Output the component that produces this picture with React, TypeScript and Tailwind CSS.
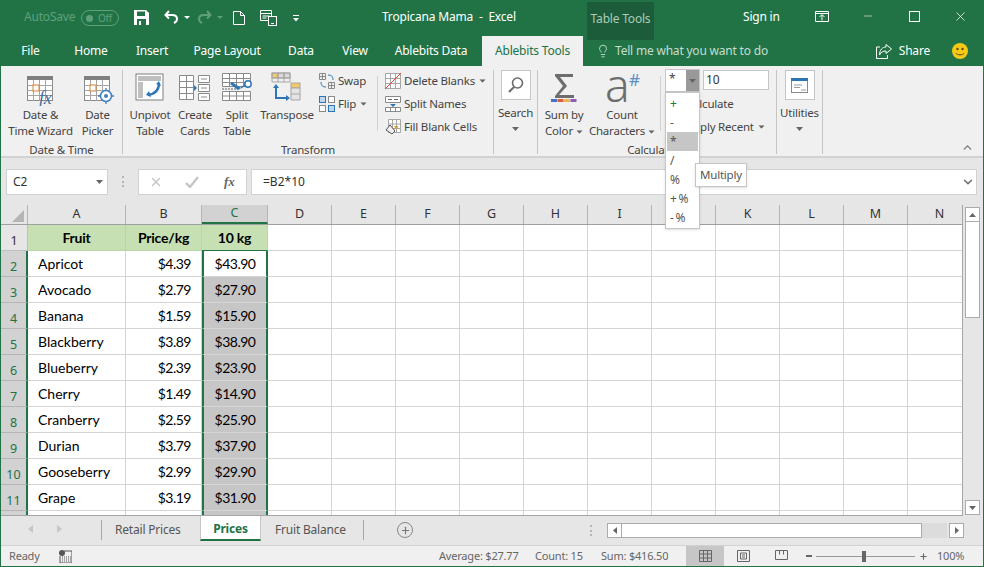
import React from 'react';
import { ChevronDown, ChevronUp, Lightbulb, Minus, Plus, X } from 'lucide-react';

const rows = [
  ['Apricot', '$4.39', '$43.90'],
  ['Avocado', '$2.79', '$27.90'],
  ['Banana', '$1.59', '$15.90'],
  ['Blackberry', '$3.89', '$38.90'],
  ['Blueberry', '$2.39', '$23.90'],
  ['Cherry', '$1.49', '$14.90'],
  ['Cranberry', '$2.59', '$25.90'],
  ['Durian', '$3.79', '$37.90'],
  ['Gooseberry', '$2.99', '$29.90'],
  ['Grape', '$3.19', '$31.90'],
  ['', '', ''],
];

const cols = [
  { n: 'A', w: 'w-[98px]' },
  { n: 'B', w: 'w-[76px]' },
  { n: 'C', w: 'w-[66px]' },
  { n: 'D', w: 'w-[64px]' },
  { n: 'E', w: 'w-[64px]' },
  { n: 'F', w: 'w-[64px]' },
  { n: 'G', w: 'w-[64px]' },
  { n: 'H', w: 'w-[64px]' },
  { n: 'I', w: 'w-[64px]' },
  { n: 'J', w: 'w-[64px]' },
  { n: 'K', w: 'w-[64px]' },
  { n: 'L', w: 'w-[64px]' },
  { n: 'M', w: 'w-[64px]' },
  { n: 'N', w: 'w-[64px]' },
];

const tabs = [
  { t: 'File', w: 'w-[59px]' },
  { t: 'Home', w: 'w-[62px]' },
  { t: 'Insert', w: 'w-[60px]' },
  { t: 'Page Layout', w: 'w-[90px]' },
  { t: 'Data', w: 'w-[58px]' },
  { t: 'View', w: 'w-[50px]' },
  { t: 'Ablebits Data', w: 'w-[102px]' },
];

const menuItems = ['+', '-', '*', '/', '%', '+\u2009%', '-\u2009%'];

function Caret({ className = '' }: { className?: string }) {
  return (
    <svg width="7" height="4" viewBox="0 0 7 4" className={className}>
      <path d="M0 0h7L3.5 4z" fill="#666" />
    </svg>
  );
}

function CalGrid() {
  return (
    <g>
      <rect x="0.5" y="0.5" width="25" height="24" fill="#fff" stroke="#8a8a8a" />
      <rect x="0" y="0" width="26" height="4" fill="#7f7f7f" />
      <path d="M0.5 9.5h25M0.5 14.5h25M0.5 19.5h25M6.5 4v21M12.5 4v21M18.5 4v21" stroke="#a6a6a6" fill="none" />
      <rect x="6" y="9" width="6" height="6" fill="#fff" stroke="#d9822b" />
    </g>
  );
}

function DateWizardIcon() {
  return (
    <svg width="30" height="30" viewBox="0 0 30 30" className="mt-[4px] ml-[3px]">
      <CalGrid />
      <text x="12" y="28" fontFamily="Liberation Serif" fontStyle="italic" fontSize="18" fill="#41719c">fx</text>
    </svg>
  );
}

function DatePickerIcon() {
  return (
    <svg width="30" height="30" viewBox="0 0 30 30" className="mt-[4px] ml-[2px]">
      <CalGrid />
      <circle cx="22" cy="20" r="5.5" fill="#fff" stroke="#3f7fbf" strokeWidth="1.5" />
      <circle cx="22" cy="20" r="2" fill="#3f7fbf" />
      <path d="M22 12v3M22 25v3M14 20h3M27 20h3" stroke="#3f7fbf" strokeWidth="1.3" />
    </svg>
  );
}

function UnpivotIcon() {
  return (
    <svg width="30" height="30" viewBox="0 0 30 30">
      <rect x="1" y="2" width="27" height="26" fill="#fff" stroke="#7f7f7f" />
      <rect x="3" y="4" width="23" height="5" fill="#bfbfbf" />
      <rect x="3" y="10" width="5" height="16" fill="#bfbfbf" />
      <path d="M24 11c0 7-4 11-11 12" stroke="#2e75b6" strokeWidth="2.4" fill="none" />
      <path d="M21 12l3-3 2 5zM14 19l-3 4 5 2z" fill="#2e75b6" />
    </svg>
  );
}

function CardsIcon() {
  return (
    <svg width="34" height="30" viewBox="0 0 34 30">
      <path d="M1.5 3.5h14v24h-14zM1.5 9.5h14M1.5 15.5h14M1.5 21.5h14M8.5 3.5v24" fill="#fff" stroke="#8a8a8a" />
      <path d="M20.5 3.5h11v7h-11zM20.5 12.5h11v7h-11zM20.5 21.5h11v7h-11zM23 7h6M23 16h6M23 25h6" fill="#fff" stroke="#8a8a8a" />
      <path d="M16 13l3 3-3 3z" fill="#2e75b6" />
    </svg>
  );
}

function SplitIcon() {
  return (
    <svg width="32" height="30" viewBox="0 0 32 30">
      <path d="M1.5 1.5h28v13h-28zM1.5 6.5h28M1.5 10.5h28M8.5 1.5v13M15.5 1.5v13M22.5 1.5v13" fill="#fff" stroke="#8a8a8a" />
      <path d="M1.5 19.5h28v9h-28zM1.5 24h28M8.5 19.5v9M15.5 19.5v9M22.5 19.5v9" fill="#fff" stroke="#8a8a8a" />
      <path d="M1 17h16" stroke="#666" strokeDasharray="2 1" />
      <path d="M11 10l9 6-3 2-8-6z" fill="#2e75b6" />
      <circle cx="27" cy="12" r="3.2" fill="#fff" stroke="#2e75b6" strokeWidth="1.5" />
      <path d="M20 16l4-3" stroke="#2e75b6" strokeWidth="1.4" />
    </svg>
  );
}

function TransposeIcon() {
  return (
    <svg width="32" height="30" viewBox="0 0 32 30">
      <rect x="1" y="1" width="6" height="5" fill="#f2c86b" stroke="#a6a6a6" />
      <rect x="7" y="1" width="6" height="5" fill="#d9d9d9" stroke="#a6a6a6" />
      <rect x="13" y="1" width="6" height="5" fill="#d9d9d9" stroke="#a6a6a6" />
      <path d="M1 1h18v9H1zM1 6h18M7 1v9M13 1v9" fill="none" stroke="#a6a6a6" />
      <rect x="20" y="11" width="9" height="5" fill="#f2c86b" stroke="#a6a6a6" />
      <path d="M20 16h9v12h-9zM20 22h9" fill="#e4e4e4" stroke="#a6a6a6" />
      <path d="M5 14v12h11" fill="none" stroke="#2e75b6" strokeWidth="2" />
      <path d="M2 16l3-4 3 4zM15 23l4 3-4 3z" fill="#2e75b6" />
    </svg>
  );
}

function SearchIcon() {
  return (
    <svg width="18" height="18" viewBox="0 0 18 18">
      <circle cx="10.5" cy="7" r="5" fill="none" stroke="#6a6a6a" strokeWidth="1.6" />
      <path d="M7 11l-5 5" stroke="#6a6a6a" strokeWidth="2" />
    </svg>
  );
}

function SumIcon() {
  return (
    <svg width="28" height="30" viewBox="0 0 28 30">
      <path d="M5 2h18v3H10l7 9-8 9h15v3H5v-2l8-10-8-10z" fill="#6d6d6d" />
      <rect x="1" y="27" width="6" height="3" fill="#4472c4" />
      <rect x="7.5" y="27" width="6" height="3" fill="#d9603b" />
      <rect x="14" y="27" width="6" height="3" fill="#e9b85c" />
      <rect x="20.5" y="27" width="6" height="3" fill="#8e5bb5" />
    </svg>
  );
}

function Large({ icon, top, bottom, w, caret }: { icon: React.ReactNode; top: string; bottom: string; w: string; caret?: boolean }) {
  return (
    <div className={`${w} flex flex-col items-center shrink-0`}>
      <div className="h-[36px] flex items-start justify-center pt-[2px]">{icon}</div>
      <div className="text-[11.5px] leading-[16px] text-[#444] whitespace-nowrap text-center mt-[1px]">
        <div>{top}</div>
        <div className="flex items-center justify-center gap-[3px]">
          {bottom}
          {caret && <Caret className="mt-[1px] scale-90" />}
        </div>
      </div>
    </div>
  );
}

function SmallIcon({ kind }: { kind: string }) {
  if (kind === 'swap')
    return (
      <svg width="16" height="16" viewBox="0 0 16 16">
        <path d="M0.5 0.5h6v6h-6zM3.5 0.5v6M0.5 3.5h6M9.5 9.5h6v6h-6zM12.5 9.5v6M9.5 12.5h6" fill="none" stroke="#8a8a8a" />
        <path d="M9 2c3 0 5 1 5 5M7 14c-3 0-5-1-5-5" fill="none" stroke="#2e75b6" />
      </svg>
    );
  if (kind === 'flip')
    return (
      <svg width="16" height="16" viewBox="0 0 16 16">
        <rect x="0.5" y="0.5" width="6" height="6" fill="#bdd7ee" stroke="#2e75b6" />
        <rect x="9.5" y="0.5" width="6" height="6" fill="#fff" stroke="#8a8a8a" />
        <rect x="0.5" y="9.5" width="6" height="6" fill="#fff" stroke="#8a8a8a" />
        <rect x="9.5" y="9.5" width="6" height="6" fill="#bdd7ee" stroke="#2e75b6" />
      </svg>
    );
  if (kind === 'delete')
    return (
      <svg width="16" height="16" viewBox="0 0 16 16">
        <path d="M0.5 0.5h15v15h-15zM0.5 5.5h15M0.5 10.5h15M5.5 0.5v15M10.5 0.5v15" fill="#fff" stroke="#a6a6a6" />
        <path d="M0 16L16 0" stroke="#e0452f" />
      </svg>
    );
  if (kind === 'names')
    return (
      <svg width="16" height="16" viewBox="0 0 16 16">
        <path d="M0.5 0.5h15v6h-15zM0.5 11.5h15v4h-15zM5.5 11.5v4M10.5 11.5v4" fill="#fff" stroke="#8a8a8a" />
        <path d="M3 3.5h4M9 3.5h4" stroke="#666" />
        <path d="M5 8h6l-3 3z" fill="#2e75b6" />
      </svg>
    );
  return (
    <svg width="16" height="16" viewBox="0 0 16 16">
      <path d="M3.5 0.5h12v13h-12zM3.5 5h12M3.5 9.5h12M7.5 0.5v13M11.5 0.5v13" fill="#fff" stroke="#a6a6a6" />
      <path d="M1 11l4-5 5 6-3 3z" fill="#f0f0f0" stroke="#555" />
      <path d="M9 7h4v1l-2 3z" fill="#e59a3c" />
    </svg>
  );
}

function Small({ kind, label, caret }: { kind: string; label: string; caret?: boolean }) {
  return (
    <div className="h-[23px] flex items-center gap-[3px] text-[11.5px] text-[#444] whitespace-nowrap">
      <SmallIcon kind={kind} />
      <span>{label}</span>
      {caret && <Caret className="ml-[1px] scale-90" />}
    </div>
  );
}

function Group({ label, w, children, labelClass = '' }: { label: string; w: string; children: React.ReactNode; labelClass?: string }) {
  return (
    <div className={`${w} shrink-0 h-[84px] border-r border-[#c6c6c6] flex flex-col`}>
      <div className="h-[75px] flex shrink-0">{children}</div>
      <div className={`text-[11.5px] leading-[9px] text-[#444] text-center whitespace-nowrap ${labelClass}`}>{label}</div>
    </div>
  );
}

function Ribbon() {
  return (
    <div className="h-[92px] bg-[#f0f0f0] border-b-2 border-[#d2d2d2] flex pt-[4px] relative shrink-0">
      <Group label="Date & Time" w="w-[122px]">
        <Large w="w-[79px]" icon={<DateWizardIcon />} top="Date &" bottom="Time Wizard" />
        <Large w="w-[35px]" icon={<DatePickerIcon />} top="Date" bottom="Picker" />
      </Group>
      <Group label="Transform" w="w-[371px]">
        <Large w="w-[48px] ml-[3px]" icon={<UnpivotIcon />} top="Unpivot" bottom="Table" />
        <Large w="w-[42px]" icon={<CardsIcon />} top="Create" bottom="Cards" />
        <Large w="w-[42px]" icon={<SplitIcon />} top="Split" bottom="Table" />
        <Large w="w-[58px]" icon={<TransposeIcon />} top="Transpose" bottom="" />
        <div className="w-[58px] ml-[3px] -mt-[1px] flex flex-col shrink-0">
          <Small kind="swap" label="Swap" />
          <Small kind="flip" label="Flip" caret />
        </div>
        <div className="w-[1px] h-[55px] bg-[#d2d2d2] mt-[6px] mr-[7px] shrink-0" />
        <div className="-mt-[1px] flex flex-col">
          <Small kind="delete" label="Delete Blanks" caret />
          <Small kind="names" label="Split Names" />
          <Small kind="fill" label="Fill Blank Cells" />
        </div>
      </Group>
      <Group label="" w="w-[44px]">
        <div className="w-[43px] flex flex-col items-center text-[11.5px] leading-[16px] text-[#444]">
          <div className="w-[30px] h-[30px] bg-white border border-[#c6c6c6] flex items-center justify-center">
            <SearchIcon />
          </div>
          <div className="mt-[5px]">Search</div>
          <Caret className="mt-[6px]" />
        </div>
      </Group>
      <Group label="Calculate" w="w-[239px]" labelClass="pr-[12px]">
        <Large w="w-[52px]" icon={<SumIcon />} top="Sum by" bottom="Color" caret />
        <Large
          w="w-[64px]"
          icon={
            <div className="relative w-[32px] h-[30px]">
              <span className="absolute left-[-1px] top-[-13px] text-[46px] leading-[50px] font-light text-[#6d6d6d]">a</span>
              <span className="absolute left-[23px] top-[-1px] text-[17px] leading-[17px] text-[#5b8fc7]">#</span>
            </div>
          }
          top="Count"
          bottom="Characters"
          caret
        />
        <div className="w-[1px] h-[55px] bg-[#d2d2d2] mt-[6px] ml-[6px] shrink-0" />
        <div className="ml-[4px] -mt-[1px] flex flex-col">
          <div className="h-[23px] flex pl-[38px] pt-[1px]">
            <div className="w-[66px] h-[20px] bg-white border border-[#c6c6c6] text-[12px] leading-[18px] text-[#333] pl-[2px]">10</div>
          </div>
          <div className="h-[23px] flex items-center pl-[21px] text-[11.5px] text-[#444]">Calculate</div>
          <div className="h-[23px] flex items-center pl-[21px] text-[11.5px] text-[#444] gap-[4px]">
            Apply Recent
            <Caret className="scale-90" />
          </div>
        </div>
      </Group>
      <Group label="" w="w-[46px]">
        <div className="w-[45px] flex flex-col items-center text-[11.5px] leading-[16px] text-[#444]">
          <div className="w-[30px] h-[30px] bg-white border border-[#c6c6c6] flex items-center justify-center">
            <svg width="17" height="15" viewBox="0 0 17 15">
              <rect x="0.5" y="0.5" width="16" height="14" fill="#fff" stroke="#8a8a8a" />
              <rect x="0" y="0" width="17" height="3" fill="#2e75b6" />
              <path d="M3 7h8M3 9.5h6M10 12h5" stroke="#9a9a9a" />
            </svg>
          </div>
          <div className="mt-[5px]">Utilities</div>
          <Caret className="mt-[6px]" />
        </div>
      </Group>
      <ChevronUp size={13} strokeWidth={2.4} className="absolute right-[9px] bottom-[2px] text-[#777]" />
    </div>
  );
}

function TitleBar() {
  return (
    <div className="h-[36px] flex items-start text-white text-[12px] relative shrink-0">
      <span className="ml-[23px] mt-[9px] w-[50px] leading-[16px] text-[#5fa07c]">AutoSave</span>
      <div className="ml-[7px] mt-[10px] w-[38px] h-[16px] rounded-full border border-[#5fa07c] flex items-center text-[10px] text-[#5fa07c] pl-[4px] gap-[5px]">
        <span className="w-[7px] h-[7px] rounded-full bg-[#5fa07c]" />
        Off
      </div>
      <svg width="15" height="15" viewBox="0 0 15 15" className="ml-[15px] mt-[10px]">
        <path d="M0 0h12l3 3v12H0z" fill="#fff" />
        <rect x="3" y="1.5" width="8" height="4.5" fill="#217346" />
        <rect x="3" y="9" width="9" height="6" fill="#217346" />
        <rect x="5" y="11" width="2" height="4" fill="#fff" />
      </svg>
      <svg width="15" height="14" viewBox="0 0 15 14" className="ml-[15px] mt-[10px]">
        <path d="M5 1L1.5 5 5 8.5" fill="none" stroke="#fff" strokeWidth="2" />
        <path d="M2 5h6c4 0 5 2 5 4s-1 3-3 4" fill="none" stroke="#fff" strokeWidth="2" />
      </svg>
      <svg width="6" height="3" viewBox="0 0 6 3" className="ml-[5px] mt-[16px]"><path d="M0 0h6L3 3z" fill="#fff" /></svg>
      <svg width="15" height="14" viewBox="0 0 15 14" className="ml-[7px] mt-[10px]">
        <path d="M10 1l3.5 4L10 8.5" fill="none" stroke="#5fa07c" strokeWidth="2" />
        <path d="M13 5H7C3 5 2 7 2 9s1 3 3 4" fill="none" stroke="#5fa07c" strokeWidth="2" />
      </svg>
      <svg width="6" height="3" viewBox="0 0 6 3" className="ml-[5px] mt-[16px]"><path d="M0 0h6L3 3z" fill="#5fa07c" /></svg>
      <svg width="12" height="14" viewBox="0 0 12 14" className="ml-[10px] mt-[11px]">
        <path d="M0.5 0.5h7l4 4v9h-11zM7.5 0.5v4h4" fill="none" stroke="#fff" />
      </svg>
      <svg width="17" height="16" viewBox="0 0 17 16" className="ml-[15px] mt-[10px]">
        <path d="M0.5 0.5h11v10h-11zM0.5 3.5h11M2.5 6h7M2.5 8h4" fill="none" stroke="#fff" />
        <rect x="8.5" y="6.5" width="8" height="9" fill="#217346" stroke="#fff" />
        <path d="M11 13.5h3" stroke="#fff" />
      </svg>
      <svg width="8" height="7" viewBox="0 0 8 7" className="ml-[15px] mt-[15px]">
        <path d="M1 0.5h6" stroke="#fff" />
        <path d="M1 3h6L4 6.5z" fill="#fff" />
      </svg>
      <span className="absolute left-[381px] top-[9px] leading-[16px] whitespace-pre">Tropicana Mama  -  Excel</span>
      <div className="absolute left-[586px] top-[2px] w-[67px] h-[38px] bg-[#1d5c3a] text-[#a9cdb9] flex items-center justify-center pb-[5px] z-10">Table Tools</div>
      <span className="absolute left-[742px] top-[9px] leading-[16px]">Sign in</span>
      <svg width="14" height="11" viewBox="0 0 14 11" className="absolute left-[814px] top-[11px]">
        <path d="M0.5 0.5h13v10h-13zM0.5 2.5h13M7 9.5V4M4.5 6L7 3.5 9.5 6" fill="none" stroke="#fff" />
      </svg>
      <Minus size={12} strokeWidth={1.2} className="absolute left-[861px] top-[10px]" />
      <svg width="11" height="11" viewBox="0 0 11 11" className="absolute left-[908px] top-[11px]">
        <rect x="0.5" y="0.5" width="10" height="10" fill="none" stroke="#fff" />
      </svg>
      <X size={15} strokeWidth={1.2} className="absolute left-[952px] top-[9px]" />
    </div>
  );
}

function TabBar() {
  return (
    <div className="h-[30px] flex text-white text-[12px] shrink-0 items-stretch">
      {tabs.map((tab) => (
        <div key={tab.t} className={`${tab.w} flex items-center justify-center`}>{tab.t}</div>
      ))}
      <div className="w-[101px] bg-[#f0f0f0] text-[#217346] flex items-center justify-center">Ablebits Tools</div>
      <Lightbulb size={14} strokeWidth={1.3} className="ml-[13px] mt-[8px] text-[#e4efe9]" />
      <span className="ml-[5px] mt-[7px] leading-[16px] text-[#c4ddcf] whitespace-nowrap">Tell me what you want to do</span>
      <div className="ml-auto flex items-center mr-[15px] gap-[7px]">
        <svg width="16" height="15" viewBox="0 0 16 15">
          <path d="M4 3H0.5v11.5h11V11" fill="none" stroke="#fff" />
          <path d="M10 0.5l5.5 4.5-5.5 4.5V7C7 7 5 8 3.5 11c0-5 3-8 6.5-8z" fill="none" stroke="#fff" />
        </svg>
        <span className="mr-[15px]">Share</span>
        <svg width="16" height="16" viewBox="0 0 16 16">
          <circle cx="8" cy="8" r="8" fill="#f6c915" />
          <circle cx="5.5" cy="6" r="1.2" fill="#5a4a10" />
          <circle cx="10.5" cy="6" r="1.2" fill="#5a4a10" />
          <path d="M4 10c1 2.5 7 2.5 8 0" fill="none" stroke="#5a4a10" />
        </svg>
      </div>
    </div>
  );
}

function FormulaBar() {
  return (
    <div className="h-[47px] bg-[#e6e6e6] flex items-start pt-[11px] shrink-0 text-[12px] text-[#333] tracking-normal">
      <div className="ml-[5px] w-[102px] h-[26px] bg-white border border-[#d2d2d2] flex items-center justify-between pl-[6px] pr-[4px]">
        C2
        <Caret />
      </div>
      <div className="ml-[14px] mt-[7px] w-[2px] h-[11px] border-l-2 border-dotted border-[#b5b5b5]" />
      <div className="ml-[14px] w-[109px] h-[26px] bg-white border border-[#d2d2d2] flex items-center text-[#c6c6c6]">
        <X size={14} strokeWidth={2.4} className="ml-[10px]" />
        <svg width="14" height="12" viewBox="0 0 14 12" className="ml-[22px]"><path d="M1 7l4 4 8-10" fill="none" stroke="#c6c6c6" strokeWidth="2.4" /></svg>
        <span className="ml-[25px] font-['Liberation_Serif',serif] italic font-bold text-[13px] text-[#666]">fx</span>
      </div>
      <div className="ml-[4px] w-[726px] h-[26px] bg-white border border-[#d2d2d2] flex items-center justify-between pl-[11px] pr-[1px]">
        =B2*10
        <ChevronDown size={14} strokeWidth={2.4} className="text-[#666]" />
      </div>
    </div>
  );
}

function Sheet() {
  return (
    <div className="h-[311px] flex shrink-0 bg-[#e6e6e6] tracking-normal">
      <div className="w-[962px] overflow-hidden border-r border-b border-[#a6a6a6]">
        <div className="h-[20px] flex text-[12.5px] border-b border-[#a0a0a0] text-[#333]">
          <div className="w-[27px] shrink-0 border-r border-[#b5b5b5] flex items-end justify-end pr-[3px] pb-[2px]">
            <svg width="12" height="12" viewBox="0 0 12 12"><path d="M12 0v12H0z" fill="#b5b5b5" /></svg>
          </div>
          {cols.map((c) => (
            <div
              key={c.n}
              className={`${c.w} shrink-0 flex items-center justify-center border-r ${c.n === 'C' ? 'bg-[#d2d2d2] text-[#217346] border-b-2 border-b-[#217346] border-r-[#b5b5b5]' : 'border-[#b5b5b5]'}`}
            >
              {c.n}
            </div>
          ))}
        </div>
        <div className="flex h-[26px] font-['Lato',sans-serif] text-[14px]">
          <div className="w-[27px] shrink-0 border-r border-b border-[#c0c0c0] text-[#333] text-[12.5px] leading-[14px] font-['Noto_Sans',sans-serif] flex items-end justify-center pb-[2px]">1</div>
          {cols.map((c, i) => (
            <div
              key={c.n}
              className={`${c.w} shrink-0 border-r border-b ${i < 3 ? 'bg-[#c6e0b4] border-[#b9d4a7] font-bold tracking-[-0.2px] text-black flex items-center justify-center' : 'bg-white border-[#d4d4d4]'} ${i === 2 ? 'border-b-[#217346]' : ''}`}
            >
              {c.n === 'A' ? 'Fruit' : c.n === 'B' ? 'Price/kg' : c.n === 'C' ? '10 kg' : ''}
            </div>
          ))}
        </div>
        {rows.map((r, idx) => (
          <div key={idx} className="flex h-[26px] font-['Lato',sans-serif] text-[14px] text-black">
            <div className="w-[27px] shrink-0 border-r-2 border-b border-[#217346] border-b-[#b5b5b5] bg-[#d2d2d2] text-[#217346] text-[12.5px] leading-[14px] font-['Noto_Sans',sans-serif] flex items-end justify-center pb-[2px]">
              {idx + 2}
            </div>
            <div className="w-[98px] shrink-0 bg-white border-r border-b border-[#d4d4d4] flex items-center pl-[10px]">{r[0]}</div>
            <div className="w-[76px] shrink-0 bg-white border-r border-b border-[#d4d4d4] flex items-center justify-end pr-[10px] tracking-[-0.5px]">{r[1]}</div>
            <div className={`w-[66px] shrink-0 border-x-2 border-x-[#217346] border-b border-b-[#d4d4d4] flex items-center justify-center tracking-[-0.5px] ${idx === 0 ? 'bg-white' : 'bg-[#c6c6c6]'}`}>{r[2]}</div>
            {cols.slice(3).map((c) => (
              <div key={c.n} className={`${c.w} shrink-0 bg-white border-r border-b border-[#d4d4d4]`} />
            ))}
          </div>
        ))}
      </div>
      <div className="w-[15px] ml-[2px] flex flex-col pt-[2px] pb-[1px]">
        <div className="h-[15px] bg-white border border-[#ababab] flex items-center justify-center shrink-0">
          <svg width="7" height="4" viewBox="0 0 7 4"><path d="M0 4h7L3.5 0z" fill="#666" /></svg>
        </div>
        <div className="h-[96px] bg-white border-x border-b border-[#ababab] shrink-0" />
        <div className="flex-1" />
        <div className="h-[15px] bg-white border border-[#ababab] flex items-center justify-center shrink-0">
          <Caret />
        </div>
      </div>
    </div>
  );
}

function SheetTabs() {
  return (
    <div className="h-[29px] bg-[#e6e6e6] flex items-start text-[12px] shrink-0 relative">
      <svg width="5" height="8" viewBox="0 0 5 8" className="ml-[27px] mt-[9px]"><path d="M5 0v8L0 4z" fill="#c6c6c6" /></svg>
      <svg width="5" height="8" viewBox="0 0 5 8" className="ml-[24px] mt-[9px]"><path d="M0 0v8l5-4z" fill="#c6c6c6" /></svg>
      <div className="ml-[39px] mt-[4px] w-[1px] h-[20px] bg-[#a6a6a6]" />
      <span className="ml-[13px] mt-[6px] w-[85px] leading-[16px] text-[#555] whitespace-nowrap">Retail Prices</span>
      <div className="w-[61px] h-[25px] pt-[2px] bg-white border-x border-b-2 border-[#c6c6c6] border-b-[#217346] font-bold text-[#217346] flex items-center justify-center">Prices</div>
      <span className="ml-[14px] mt-[6px] w-[88px] leading-[16px] text-[#555] whitespace-nowrap">Fruit Balance</span>
      <div className="mt-[4px] w-[1px] h-[20px] bg-[#a6a6a6]" />
      <div className="ml-[33px] mt-[6px] w-[16px] h-[16px] rounded-full border border-[#888] flex items-center justify-center text-[#777]">
        <Plus size={11} strokeWidth={2.5} />
      </div>
      <div className="ml-[177px] mt-[9px] w-[2px] h-[11px] border-l-2 border-dotted border-[#b5b5b5]" />
      <div className="ml-[15px] mt-[7px] w-[357px] h-[15px] flex">
        <div className="w-[15px] bg-white border border-[#ababab] flex items-center justify-center">
          <svg width="4" height="7" viewBox="0 0 4 7"><path d="M4 0v7L0 3.5z" fill="#666" /></svg>
        </div>
        <div className="w-[300px] bg-white border-y border-r border-[#ababab]" />
        <div className="flex-1 bg-[#dcdcdc] mr-[2px]" />
        <div className="w-[15px] bg-white border border-[#ababab] flex items-center justify-center">
          <svg width="4" height="7" viewBox="0 0 4 7"><path d="M0 0v7l4-3.5z" fill="#666" /></svg>
        </div>
      </div>
    </div>
  );
}

function StatusBar() {
  return (
    <div className="h-[21px] bg-[#f0f0f0] border-t border-[#d2d2d2] flex items-stretch text-[11px] text-[#666] shrink-0 whitespace-nowrap">
      <span className="ml-[8px] self-center w-[50px]">Ready</span>
      <svg width="13" height="13" viewBox="0 0 13 13" className="self-center">
        <circle cx="3" cy="3" r="3" fill="#555" />
        <path d="M5 1h8v12H1V6" fill="none" stroke="#555" strokeWidth="1" />
        <path d="M3 7h9M3 9h9M3 11h9" stroke="#555" strokeDasharray="1 1" />
      </svg>
      <span className="ml-[367px] self-center w-[96px]">Average: $27.77</span>
      <span className="self-center w-[66px]">Count: 15</span>
      <span className="self-center w-[85px]">Sum: $416.50</span>
      <div className="w-[38px] bg-[#c6c6c6] flex items-center justify-center">
        <svg width="13" height="12" viewBox="0 0 13 12"><path d="M0.5 0.5h12v11h-12zM0.5 4h12M0.5 8h12M4.5 0.5v11M8.5 0.5v11" fill="none" stroke="#666" /></svg>
      </div>
      <div className="w-[38px] flex items-center justify-center">
        <svg width="13" height="12" viewBox="0 0 13 12"><path d="M0.5 0.5h12v11h-12zM3.5 3h6v6h-6zM5 5h3M5 7h3" fill="none" stroke="#666" /></svg>
      </div>
      <div className="w-[38px] flex items-center justify-center">
        <svg width="13" height="12" viewBox="0 0 13 12"><path d="M0.5 0.5h12v9h-12zM4.5 0.5v4M8.5 0.5v4" fill="none" stroke="#666" /></svg>
      </div>
      <div className="ml-[6px] flex items-center w-[122px]">
        <span className="w-[6px] h-[2px] bg-[#666]" />
        <div className="ml-[4px] w-[99px] h-[1px] bg-[#999] relative">
          <span className="absolute left-[46px] -top-[5px] w-[4px] h-[11px] bg-[#666]" />
        </div>
        <Plus size={9} strokeWidth={3} className="ml-[4px] text-[#666]" />
      </div>
      <span className="ml-[9px] self-center">100%</span>
    </div>
  );
}

export default function App() {
  return (
    <div className="font-['Noto_Sans',sans-serif] tracking-[-0.2px] w-[984px] h-[567px] bg-[#217346] border-x border-b border-[#217346] flex flex-col relative overflow-hidden">
      <TitleBar />
      <TabBar />
      <Ribbon />
      <FormulaBar />
      <Sheet />
      <SheetTabs />
      <StatusBar />

      {/* open operator dropdown */}
      <div className="absolute left-[664px] top-[69px] w-[35px] h-[23px] bg-white border border-[#c6c6c6] flex text-[12px] text-[#444]">
        <span className="flex-1 pl-[3px]">*</span>
        <div className="w-[13px] bg-[#999] flex items-center justify-center"><Caret /></div>
      </div>
      <div className="absolute left-[664px] top-[92px] w-[35px] h-[137px] bg-white border border-[#c6c6c6] shadow-sm flex flex-col text-[12px] text-[#555] p-[1px]">
        {menuItems.map((m) => (
          <div key={m} className={`h-[19px] leading-[19px] pl-[3px] whitespace-pre ${m === '*' ? 'bg-[#c6c6c6]' : ''} ${m === '+' ? 'text-[#217346]' : ''}`}>{m}</div>
        ))}
      </div>
      <div className="absolute left-[694px] top-[163px] h-[24px] px-[4px] bg-white border border-[#c6c6c6] shadow-sm text-[11.5px] leading-[21px] text-[#555]">Multiply</div>
    </div>
  );
}
